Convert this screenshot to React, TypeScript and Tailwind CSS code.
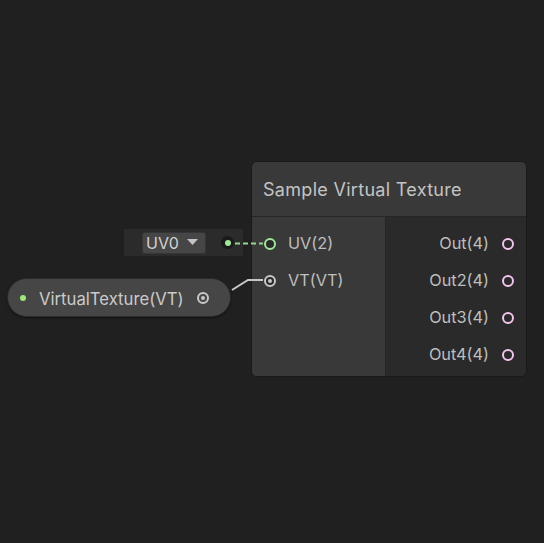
import React from "react";

const font = { fontFamily: "Inter, 'Noto Sans', sans-serif" };

function InPort({ kind }: { kind: "green" | "grey" }) {
  if (kind === "green") {
    return <div className="w-[12px] h-[12px] rounded-full border-2 border-[#9ee89a] bg-[#2a2a2a]" />;
  }
  return (
    <div className="w-[12px] h-[12px] rounded-full border-2 border-[#c8c8c8] bg-[#2a2a2a] flex items-center justify-center">
      <div className="w-[4px] h-[4px] rounded-full bg-[#c8c8c8]" />
    </div>
  );
}

function OutPort() {
  return <div className="w-[12px] h-[12px] rounded-full border-2 border-[#f2c4ee] bg-[#2a2a2a]" />;
}

export default function App() {
  return (
    <div className="relative w-[544px] h-[543px] bg-[#202020] overflow-hidden text-[#bebebe]" style={font}>
      {/* UV0 property */}
      <div className="absolute left-[124px] top-[229px] w-[119px] h-[27px] bg-[#2b2b2b] flex items-center">
        <div className="ml-[18px] w-[64px] h-[22px] bg-[#464646] rounded-[3px] border border-[#353535] flex items-center pl-[3px] pr-[7px] justify-between">
          <span className="text-[16px] text-[#d2d2d2] leading-none">UV0</span>
          <svg width="11" height="7" viewBox="0 0 11 7">
            <polygon points="0,0 11,0 5.5,6" fill="#c4c4c4" />
          </svg>
        </div>
        <div className="ml-[15px] w-[13px] h-[13px] rounded-full bg-[#1a1a1a] flex items-center justify-center">
          <div className="w-[6px] h-[6px] rounded-full bg-[#9ee89a]" />
        </div>
      </div>

      {/* VirtualTexture property pill */}
      <div className="absolute left-[7px] top-[278px] w-[224px] h-[39px] rounded-full bg-[#464646] border border-[#2a2a2a] flex items-center shadow-[0_1px_2px_rgba(0,0,0,0.5)]">
        <div className="ml-[12px] w-[6px] h-[6px] rounded-full bg-[#9ee87a]" />
        <span className="ml-[13px] text-[16.7px] text-[#cacaca] leading-none mt-[4px]">VirtualTexture(VT)</span>
        <div className="ml-[13px] w-[12px] h-[12px] rounded-full border-2 border-[#c8c8c8] flex items-center justify-center">
          <div className="w-[4px] h-[4px] rounded-full bg-[#c8c8c8]" />
        </div>
      </div>

      {/* Sample Virtual Texture node */}
      <div className="absolute left-[251px] top-[161px] w-[276px] h-[216px] rounded-[6px] border border-[#191919] overflow-hidden flex flex-col bg-[#2a2a2a]">
        <div className="h-[55px] bg-[#393939] border-b border-[#262626] flex items-center pl-[11px] pt-[1px]">
          <span className="text-[18px] tracking-[0.3px] text-[#c4c4c4]">Sample Virtual Texture</span>
        </div>
        <div className="flex flex-1">
          <div className="w-[134px] bg-[#393939] border-r border-[#262626] pt-[8px] flex flex-col">
            <div className="h-[37px] flex items-center pl-[12px]">
              <InPort kind="green" />
              <span className="ml-[12px] text-[16.3px]">UV(2)</span>
            </div>
            <div className="h-[37px] flex items-center pl-[12px]">
              <InPort kind="grey" />
              <span className="ml-[12px] text-[16.3px]">VT(VT)</span>
            </div>
          </div>
          <div className="flex-1 bg-[#2a2a2a] pt-[8px] flex flex-col">
            {["Out(4)", "Out2(4)", "Out3(4)", "Out4(4)"].map((t) => (
              <div key={t} className="h-[37px] flex items-center justify-end pr-[12px]">
                <span className="mr-[13px] text-[16.3px]">{t}</span>
                <OutPort />
              </div>
            ))}
          </div>
        </div>
      </div>

      {/* wires (drawn over the edges they join) */}
      <svg className="absolute left-0 top-0 pointer-events-none" width="544" height="543">
        <line x1="235" y1="243.5" x2="263" y2="243.5" stroke="#8fd88c" strokeWidth="2" strokeDasharray="5 3" />
        <polyline points="232,290 248,280 263,280" fill="none" stroke="#c8c8c8" strokeWidth="2" />
      </svg>
    </div>
  );
}
